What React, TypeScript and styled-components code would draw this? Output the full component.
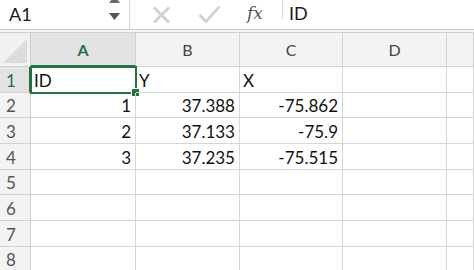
import styled, { createGlobalStyle } from "styled-components";

const GlobalStyle = createGlobalStyle`
  html, body {
    margin: 0;
    padding: 0;
    background: #ffffff;
    overflow: hidden;
  }
  body {
    font-family: Lato, "Liberation Sans", sans-serif;
  }
`;

const columns = ["A", "B", "C", "D", ""];

const rows: string[][] = [
  ["ID", "Y", "X", "", ""],
  ["1", "37.388", "-75.862", "", ""],
  ["2", "37.133", "-75.9", "", ""],
  ["3", "37.235", "-75.515", "", ""],
  ["", "", "", "", ""],
  ["", "", "", "", ""],
  ["", "", "", "", ""],
  ["", "", "", "", ""],
];

const isNumber = (v: string) => v !== "" && !isNaN(Number(v));

const Window = styled.div`
  width: 474px;
  height: 270px;
  overflow: hidden;
  background: #ffffff;
`;

const FormulaBar = styled.div`
  height: 29px;
  display: flex;
  align-items: center;
  border-bottom: 1px solid #c9c9c9;
  background: #ffffff;
  overflow: hidden;
`;

const NameBox = styled.div`
  flex: 0 0 130px;
  height: 100%;
  display: flex;
  align-items: center;
  justify-content: space-between;
  padding: 0 9px 2px 9px;
  box-sizing: border-box;
  border-right: 1px solid #d4d4d4;
  font-size: 18px;
  color: #1a1a1a;
  overflow: hidden;
`;

const Arrows = styled.div`
  display: flex;
  flex-direction: column;
  align-items: center;
  gap: 10px;
  margin-top: -11px;

  svg {
    flex-shrink: 0;
  }
`;

const ToolIcon = styled.svg<{ $gap: number }>`
  flex-shrink: 0;
  margin-left: ${(p) => p.$gap}px;
`;

const Fx = styled.div`
  flex-shrink: 0;
  font-family: "DejaVu Serif", "Liberation Serif", serif;
  font-style: italic;
  font-size: 17px;
  color: #555555;
  margin-left: 26px;
  padding-bottom: 4px;
`;

const Divider = styled.div`
  flex-shrink: 0;
  width: 1px;
  height: 20px;
  align-self: flex-start;
  background: #dadada;
  margin-left: 19px;
`;

const FormulaText = styled.div`
  padding-left: 6px;
  font-size: 18px;
  color: #1a1a1a;
  padding-bottom: 4px;
`;

const Gap = styled.div`
  height: 2px;
  background: #f4f4f4;
  border-bottom: 1px solid #d0d0d0;
`;

const Sheet = styled.div`
  display: grid;
  grid-template-columns: 31px 105px 104px 103px 104px 1fr;
  grid-template-rows: 34px repeat(8, 25.67px);
`;

const Corner = styled.div`
  position: relative;
  background: #f1f1f1;
  border-right: 1px solid #cfcfcf;
  border-bottom: 1px solid #cfcfcf;
  box-sizing: border-box;
`;

const ColHead = styled.div<{ $active?: boolean }>`
  display: flex;
  align-items: center;
  justify-content: center;
  box-sizing: border-box;
  background: ${(p) => (p.$active ? "#e3e3e3" : "#f3f3f3")};
  border-right: 1px solid #d2d2d2;
  border-bottom: ${(p) => (p.$active ? "2px solid #217346" : "1px solid #cfcfcf")};
  color: ${(p) => (p.$active ? "#217346" : "#444444")};
  font-weight: ${(p) => (p.$active ? 700 : 400)};
  font-size: 16px;
  padding-top: ${(p) => (p.$active ? "1px" : "0")};
`;

const RowHead = styled.div<{ $active?: boolean }>`
  display: flex;
  align-items: center;
  justify-content: flex-start;
  padding-left: 6px;
  box-sizing: border-box;
  background: ${(p) => (p.$active ? "#e3e3e3" : "#f3f3f3")};
  border-right: ${(p) => (p.$active ? "2px solid #217346" : "1px solid #cfcfcf")};
  border-bottom: 1px solid #d2d2d2;
  color: ${(p) => (p.$active ? "#217346" : "#555555")};
  font-size: 17px;
  padding-top: 2px;
`;

const Cell = styled.div<{ $num?: boolean }>`
  position: relative;
  display: flex;
  align-items: center;
  justify-content: ${(p) => (p.$num ? "flex-end" : "flex-start")};
  padding: 2px 4px 0 3px;
  box-sizing: border-box;
  border-right: 1px solid #d6d6d6;
  border-bottom: 1px solid #d6d6d6;
  font-size: 17px;
  color: #111111;
  white-space: nowrap;
`;

const Selection = styled.div`
  position: absolute;
  left: -1px;
  top: -1px;
  right: -2px;
  bottom: -2px;
  border: 2px solid #217346;
  pointer-events: none;
`;

const Handle = styled.div`
  position: absolute;
  right: -5px;
  bottom: -5px;
  width: 7px;
  height: 7px;
  background: #217346;
  border: 1px solid #ffffff;
`;

const App = () => {
  return (
    <Window>
      <GlobalStyle />
      <FormulaBar>
        <NameBox>
          <span>A1</span>
          <Arrows>
            <svg width="11" height="7" viewBox="0 0 11 7">
              <path d="M0 7 L5.5 0 L11 7 Z" fill="#6b6b6b" />
            </svg>
            <svg width="11" height="7" viewBox="0 0 11 7">
              <path d="M0 0 L11 0 L5.5 7 Z" fill="#555555" />
            </svg>
          </Arrows>
        </NameBox>
        <ToolIcon $gap={22} width="19" height="18" viewBox="0 0 19 18">
          <path d="M2 1.5 L17 16.5 M17 1.5 L2 16.5" stroke="#cfcfcf" strokeWidth="2.6" />
        </ToolIcon>
        <ToolIcon $gap={27} width="23" height="19" viewBox="0 0 23 19">
          <path d="M1.5 10 L8 16.5 L21.5 1.5" stroke="#cfcfcf" strokeWidth="2.6" fill="none" />
        </ToolIcon>
        <Fx>fx</Fx>
        <Divider />
        <FormulaText>ID</FormulaText>
      </FormulaBar>
      <Gap />
      <Sheet>
        <Corner>
          <svg
            width="24"
            height="24"
            viewBox="0 0 24 24"
            style={{ position: "absolute", right: 3, bottom: 3 }}
          >
            <path d="M24 0 L24 24 L0 24 Z" fill="#dcdcdc" />
          </svg>
        </Corner>
        {columns.map((c, i) => (
          <ColHead key={i} $active={i === 0}>
            {c}
          </ColHead>
        ))}
        {rows.map((row, r) => [
          <RowHead key={`h${r}`} $active={r === 0}>
            {r + 1}
          </RowHead>,
          ...row.map((v, c) => (
            <Cell key={`${r}-${c}`} $num={isNumber(v)}>
              {v}
              {r === 0 && c === 0 && (
                <Selection>
                  <Handle />
                </Selection>
              )}
            </Cell>
          )),
        ])}
      </Sheet>
    </Window>
  );
};

export default App;
